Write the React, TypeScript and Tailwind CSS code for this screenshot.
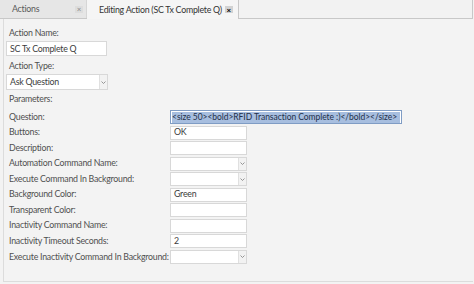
import React from 'react'

type Kind = 'text' | 'select'

interface Param {
  label: string
  kind: Kind
  value?: string
  wide?: boolean
}

const params: Param[] = [
  { label: 'Question:', kind: 'text', value: '<size 50><bold>RFID Transaction Complete :)</bold></size>', wide: true },
  { label: 'Buttons:', kind: 'text', value: 'OK' },
  { label: 'Description:', kind: 'text' },
  { label: 'Automation Command Name:', kind: 'select' },
  { label: 'Execute Command In Background:', kind: 'select' },
  { label: 'Background Color:', kind: 'text', value: 'Green' },
  { label: 'Transparent Color:', kind: 'text' },
  { label: 'Inactivity Command Name:', kind: 'text' },
  { label: 'Inactivity Timeout Seconds:', kind: 'text', value: '2' },
  { label: 'Execute Inactivity Command In Background:', kind: 'select' }
]

const Chevron = () => (
  <div className="flex h-full w-[8px] items-center justify-center border-l border-[#e0e0e0] bg-[#f2f2f2]">
    <svg width="5" height="3" viewBox="0 0 5 3">
      <path d="M0.5 0.5 L2.5 2.5 L4.5 0.5" fill="none" stroke="#8a8a8a" strokeWidth="0.9" />
    </svg>
  </div>
)

const CloseBox = ({ active }: { active?: boolean }) => (
  <div
    className={`flex h-[7px] w-[8px] items-center justify-center text-[8px] leading-none tracking-normal ${
      active ? 'bg-[#d2d2d2] font-bold text-black' : 'bg-[#dddddd] text-[#8a8a8a]'
    }`}
  >
    ×
  </div>
)

const Field = ({ p }: { p: Param }) => {
  if (p.wide) {
    return (
      <div className="flex h-[14px] w-[232px] items-center overflow-hidden border border-[#7f9cc4] bg-white px-[1px]">
        <span className="flex h-[11px] flex-1 items-center whitespace-nowrap bg-[#a7bedf] text-[8.5px] leading-none tracking-[-0.05px] text-[#23304a]">
          {p.value}
        </span>
      </div>
    )
  }
  return (
    <div className="flex h-[14px] w-[77px] items-center border border-[#d8d8d8] bg-white">
      <span className="flex-1 px-[3px] leading-none text-[#3c3c3c]">{p.value}</span>
      {p.kind === 'select' && <Chevron />}
    </div>
  )
}

export default function App() {
  return (
    <div className="h-[284px] w-[474px] overflow-hidden bg-[#f3f3f3] font-[Lato,sans-serif] text-[8.8px] tracking-[-0.25px] text-[#505050]">
      {/* Tab strip */}
      <div className="flex h-[19px] w-[473px] border-b border-r border-[#c8c8c8]">
        <div className="flex w-[87px] items-center justify-between border-r border-[#d6d6d6] bg-[#e6e6e6] pl-[12px] pr-[3px]">
          <span className="text-[#5a5a5a]">Actions</span>
          <CloseBox />
        </div>
        <div className="mb-[-1px] flex w-[152px] items-center gap-[3px] border-r border-[#c8c8c8] bg-[#f5f5f5] pl-[12px]">
          <span className="whitespace-nowrap text-[#333]">Editing Action (SC Tx Complete Q)</span>
          <CloseBox active />
        </div>
        <div className="flex-1 bg-[#f2f2f2]" />
      </div>

      {/* Content */}
      <div className="ml-[3px] h-[263px] w-[470px] border-b border-l border-[#dcdcdc] pl-[2px] pt-[8px]">
        <div className="pl-[3px] leading-[12px]">Action Name:</div>
        <div className="mt-[2px] flex h-[15px] w-[101px] items-center border border-[#d8d8d8] bg-white px-[3px] text-[#3c3c3c]">
          SC Tx Complete Q
        </div>
        <div className="mt-[4px] pl-[3px] leading-[12px]">Action Type:</div>
        <div className="mt-[2px] flex h-[16px] w-[102px] items-center border border-[#d8d8d8] bg-white text-[#3c3c3c]">
          <span className="flex-1 px-[3px]">Ask Question</span>
          <Chevron />
        </div>
        <div className="mt-[3px] pl-[3px] leading-[12px]">Parameters:</div>

        <div className="mt-[5px] flex flex-col gap-[1.55px]">
          {params.map((p) => (
            <div key={p.label} className="flex h-[14px] items-center">
              <span className="w-[164px] whitespace-nowrap pl-[3px] leading-none">{p.label}</span>
              <Field p={p} />
            </div>
          ))}
        </div>
      </div>
    </div>
  )
}
